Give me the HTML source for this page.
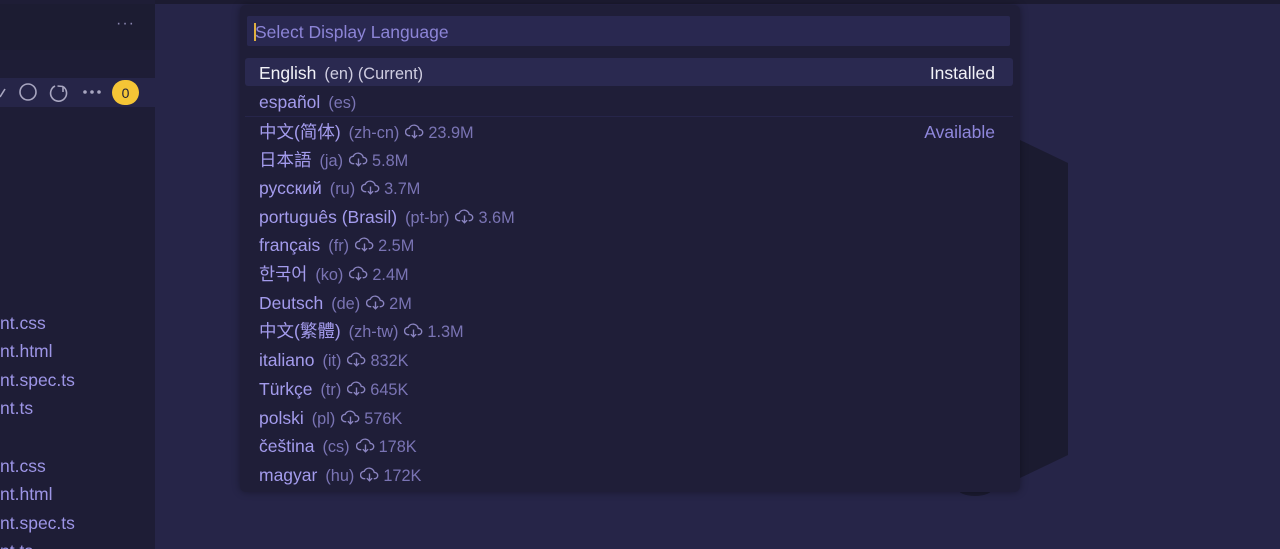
<!DOCTYPE html>
<html style="overflow:hidden;height:549px"><head><meta charset="utf-8"><style>
*{margin:0;padding:0;box-sizing:border-box}
body{width:1280px;height:549px;overflow:hidden;background:#262548;font-family:"Liberation Sans","Noto Sans CJK SC",sans-serif;position:relative}
.top{position:absolute;left:0;top:0;width:1280px;height:4px;background:#1c1b31}
.side{position:absolute;left:0;top:0;width:155px;height:549px;background:#1e1d36;overflow:hidden}
.sh{position:absolute;left:0;top:4px;width:155px;height:46px;background:#1c1c32}
.tb{position:absolute;left:0;top:78px;width:155px;height:29px;background:#262548}
.f{position:absolute;left:0;font-size:17.5px;color:#9d95e6}
.panel{position:absolute;left:240px;top:5px;width:780px;height:487px;background:#1f1e38;border-radius:6px;box-shadow:0 0 8px rgba(0,0,0,.35)}
.inp{position:absolute;left:7px;top:11px;width:763px;height:30px;background:#292850;border-radius:2px;font-size:17.5px;color:#8c84d6;line-height:32px;padding-left:8px}
.caret{position:absolute;left:7px;top:7px;width:2px;height:18px;background:#e0b040}
.row{position:absolute;left:5px;width:768px;height:28px;font-size:17.5px;line-height:31px;padding-left:14px;color:#a39bec;white-space:nowrap}
.row.sel{background:#2a2950;border-radius:3px;color:#f2f2f8}
.row .d{color:#7a74b4;font-size:16.3px;margin-left:8px}
.row.sel .d{color:#cfcde0}
.row .r{position:absolute;right:18px;top:0}
.cl{display:inline-block;width:19px;height:15px;vertical-align:-1px;margin:0 4px 0 6px}
.sep{position:absolute;left:5px;top:111px;width:768px;height:1px;background:#26254a}
</style></head><body>
<div class="top"></div>
<div class="side">
<div class="sh"></div>
<div style="position:absolute;left:116px;top:15px;color:#8a86b0;font-size:16px;letter-spacing:1px">···</div>
<div class="tb"></div>
<svg style="position:absolute;left:0;top:82px" width="110" height="22" viewBox="0 0 110 22" fill="none" stroke="#a8a6c0" stroke-width="1.6"><path d="M0 15 L5 7"/><circle cx="28" cy="10" r="8"/><path d="M55 4 A8 8 0 1 0 63 4.5 M63 4.5 L63 10 M63 4.5 L57.5 4"/><circle cx="85" cy="10" r="1" fill="#a8a6c0"/><circle cx="92" cy="10" r="1" fill="#a8a6c0"/><circle cx="99" cy="10" r="1" fill="#a8a6c0"/></svg>
<div style="position:absolute;left:112px;top:80px;width:27px;height:25px;border-radius:13px;background:#f5c536;color:#1e1d36;font-size:14px;text-align:center;line-height:26px">0</div>
<div class="f" style="top:313px">nt.css</div>
<div class="f" style="top:341px">nt.html</div>
<div class="f" style="top:370px">nt.spec.ts</div>
<div class="f" style="top:398px">nt.ts</div>
<div class="f" style="top:456px">nt.css</div>
<div class="f" style="top:484px">nt.html</div>
<div class="f" style="top:513px">nt.spec.ts</div>
<div class="f" style="top:541px">nt.ts</div>
</div>
<svg style="position:absolute;left:960px;top:140px" width="110" height="360"><polygon points="60,0 108,23 108,315 60,338 60,0" fill="#1b1b30"/><ellipse cx="15" cy="348" rx="18" ry="8" fill="#1b1b30"/></svg>
<div class="panel">
<div class="inp"><div class="caret"></div>Select Display Language</div>
<div class="row sel" style="top:53px">English<span class="d">(en) (Current)</span><span class="r">Installed</span></div>
<div class="row" style="top:82px">español<span class="d">(es)</span></div>
<div class="sep"></div>
<div class="row" style="top:112px">中文(简体)<span class="d">(zh-cn)</span><svg class="cl" viewBox="0 0 18 14"><path d="M5 11H4a3.5 3.5 0 0 1 0-7 5 5 0 0 1 9.5 1A3 3 0 0 1 14 11h-1M9 6v7M6.5 10.5 9 13l2.5-2.5" fill="none" stroke="#8a84c0" stroke-width="1.3"/></svg><span class="d" style="margin:0">23.9M</span><span class="r" style="color:#8f87dc">Available</span></div>
<div class="row" style="top:140px">日本語<span class="d">(ja)</span><svg class="cl" viewBox="0 0 18 14"><path d="M5 11H4a3.5 3.5 0 0 1 0-7 5 5 0 0 1 9.5 1A3 3 0 0 1 14 11h-1M9 6v7M6.5 10.5 9 13l2.5-2.5" fill="none" stroke="#8a84c0" stroke-width="1.3"/></svg><span class="d" style="margin:0">5.8M</span></div>
<div class="row" style="top:168px">русский<span class="d">(ru)</span><svg class="cl" viewBox="0 0 18 14"><path d="M5 11H4a3.5 3.5 0 0 1 0-7 5 5 0 0 1 9.5 1A3 3 0 0 1 14 11h-1M9 6v7M6.5 10.5 9 13l2.5-2.5" fill="none" stroke="#8a84c0" stroke-width="1.3"/></svg><span class="d" style="margin:0">3.7M</span></div>
<div class="row" style="top:197px">português (Brasil)<span class="d">(pt-br)</span><svg class="cl" viewBox="0 0 18 14"><path d="M5 11H4a3.5 3.5 0 0 1 0-7 5 5 0 0 1 9.5 1A3 3 0 0 1 14 11h-1M9 6v7M6.5 10.5 9 13l2.5-2.5" fill="none" stroke="#8a84c0" stroke-width="1.3"/></svg><span class="d" style="margin:0">3.6M</span></div>
<div class="row" style="top:225px">français<span class="d">(fr)</span><svg class="cl" viewBox="0 0 18 14"><path d="M5 11H4a3.5 3.5 0 0 1 0-7 5 5 0 0 1 9.5 1A3 3 0 0 1 14 11h-1M9 6v7M6.5 10.5 9 13l2.5-2.5" fill="none" stroke="#8a84c0" stroke-width="1.3"/></svg><span class="d" style="margin:0">2.5M</span></div>
<div class="row" style="top:254px">한국어<span class="d">(ko)</span><svg class="cl" viewBox="0 0 18 14"><path d="M5 11H4a3.5 3.5 0 0 1 0-7 5 5 0 0 1 9.5 1A3 3 0 0 1 14 11h-1M9 6v7M6.5 10.5 9 13l2.5-2.5" fill="none" stroke="#8a84c0" stroke-width="1.3"/></svg><span class="d" style="margin:0">2.4M</span></div>
<div class="row" style="top:283px">Deutsch<span class="d">(de)</span><svg class="cl" viewBox="0 0 18 14"><path d="M5 11H4a3.5 3.5 0 0 1 0-7 5 5 0 0 1 9.5 1A3 3 0 0 1 14 11h-1M9 6v7M6.5 10.5 9 13l2.5-2.5" fill="none" stroke="#8a84c0" stroke-width="1.3"/></svg><span class="d" style="margin:0">2M</span></div>
<div class="row" style="top:311px">中文(繁體)<span class="d">(zh-tw)</span><svg class="cl" viewBox="0 0 18 14"><path d="M5 11H4a3.5 3.5 0 0 1 0-7 5 5 0 0 1 9.5 1A3 3 0 0 1 14 11h-1M9 6v7M6.5 10.5 9 13l2.5-2.5" fill="none" stroke="#8a84c0" stroke-width="1.3"/></svg><span class="d" style="margin:0">1.3M</span></div>
<div class="row" style="top:340px">italiano<span class="d">(it)</span><svg class="cl" viewBox="0 0 18 14"><path d="M5 11H4a3.5 3.5 0 0 1 0-7 5 5 0 0 1 9.5 1A3 3 0 0 1 14 11h-1M9 6v7M6.5 10.5 9 13l2.5-2.5" fill="none" stroke="#8a84c0" stroke-width="1.3"/></svg><span class="d" style="margin:0">832K</span></div>
<div class="row" style="top:369px">Türkçe<span class="d">(tr)</span><svg class="cl" viewBox="0 0 18 14"><path d="M5 11H4a3.5 3.5 0 0 1 0-7 5 5 0 0 1 9.5 1A3 3 0 0 1 14 11h-1M9 6v7M6.5 10.5 9 13l2.5-2.5" fill="none" stroke="#8a84c0" stroke-width="1.3"/></svg><span class="d" style="margin:0">645K</span></div>
<div class="row" style="top:398px">polski<span class="d">(pl)</span><svg class="cl" viewBox="0 0 18 14"><path d="M5 11H4a3.5 3.5 0 0 1 0-7 5 5 0 0 1 9.5 1A3 3 0 0 1 14 11h-1M9 6v7M6.5 10.5 9 13l2.5-2.5" fill="none" stroke="#8a84c0" stroke-width="1.3"/></svg><span class="d" style="margin:0">576K</span></div>
<div class="row" style="top:426px">čeština<span class="d">(cs)</span><svg class="cl" viewBox="0 0 18 14"><path d="M5 11H4a3.5 3.5 0 0 1 0-7 5 5 0 0 1 9.5 1A3 3 0 0 1 14 11h-1M9 6v7M6.5 10.5 9 13l2.5-2.5" fill="none" stroke="#8a84c0" stroke-width="1.3"/></svg><span class="d" style="margin:0">178K</span></div>
<div class="row" style="top:455px">magyar<span class="d">(hu)</span><svg class="cl" viewBox="0 0 18 14"><path d="M5 11H4a3.5 3.5 0 0 1 0-7 5 5 0 0 1 9.5 1A3 3 0 0 1 14 11h-1M9 6v7M6.5 10.5 9 13l2.5-2.5" fill="none" stroke="#8a84c0" stroke-width="1.3"/></svg><span class="d" style="margin:0">172K</span></div>
</div>
</body></html>
